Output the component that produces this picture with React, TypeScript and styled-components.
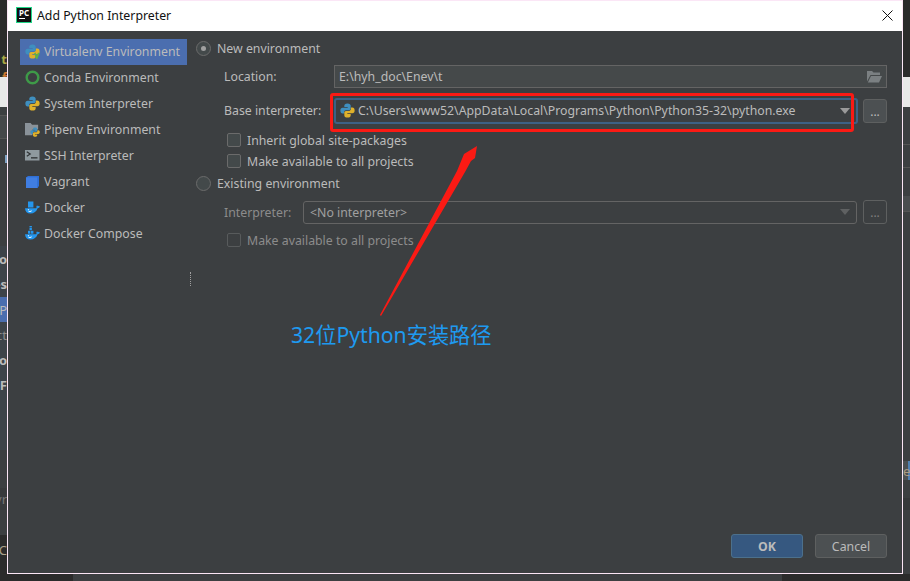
import React from 'react';
import styled, { createGlobalStyle } from 'styled-components';

const GlobalStyle = createGlobalStyle`
  html, body {
    margin: 0;
    padding: 0;
    background: #2b2b2b;
  }
`;

const Stage = styled('div')`
  position: relative;
  display: flex;
  flex-direction: column;
  width: 910px;
  height: 581px;
  overflow: hidden;
  font-family: "Noto Sans", "Noto Sans CJK SC", sans-serif;
  font-size: 12.3px;
  color: #bbbbbb;
`;

const MiddleRow = styled('div')`
  display: flex;
  height: 574px;
`;

const Strip = styled('div')<{ $width: number }>`
  display: flex;
  flex-direction: column;
  flex: none;
  width: ${ (p) => p.$width }px;
  overflow: hidden;
`;

const StripPart = styled('div')<{ $height: number; $bg: string; $line?: boolean; $edge?: string; $alignTop?: boolean; $start?: boolean }>`
  display: flex;
  flex: none;
  align-items: ${ (p) => (p.$alignTop ? 'flex-start' : 'center') };
  justify-content: ${ (p) => (p.$start ? 'flex-start' : 'flex-end') };
  height: ${ (p) => p.$height }px;
  background: ${ (p) => p.$bg };
  box-sizing: border-box;
  border-bottom: ${ (p) => (p.$line ? '1px solid #555' : 'none') };
  box-shadow: ${ (p) => (p.$edge ? `inset -2px 0 ${ p.$edge }` : 'none') };
  overflow: hidden;
`;

const StripText = styled('span')<{ $color: string; $bold?: boolean }>`
  flex: none;
  color: ${ (p) => p.$color };
  font-size: 13px;
  line-height: 14px;
  font-weight: ${ (p) => (p.$bold ? 700 : 400) };
`;

const BottomBar = styled('div')`
  display: flex;
  height: 7px;
  background: #2b2b2b;
  padding-left: 73px;
  padding-right: 128px;
`;

const BottomFill = styled('div')`
  flex: 1;
  background: #3c3f41;
`;

const Dialog = styled('div')`
  display: flex;
  flex: none;
  flex-direction: column;
  box-sizing: border-box;
  width: 896px;
  height: 574px;
  background: #3c3f41;
  border: 1px solid #fbe6f6;
`;

const TitleBar = styled('div')`
  display: flex;
  flex: none;
  align-items: center;
  box-sizing: border-box;
  height: 30px;
  background: #ffffff;
  padding: 0 9px 2px 8px;
  color: #111111;
`;

const AppLogo = styled('div')`
  display: flex;
  flex: none;
  flex-direction: column;
  box-sizing: border-box;
  width: 16px;
  height: 16px;
  background: #111111;
  border: 1px solid #21d789;
  padding: 1px 2px;
  color: #ffffff;
  font-size: 8px;
  font-weight: 700;
  line-height: 8px;
`;

const LogoBar = styled('div')`
  width: 6px;
  height: 1px;
  margin-top: 1px;
  background: #ffffff;
`;

const TitleText = styled('span')`
  flex: 1;
  margin-left: 5px;
`;

const Body = styled('div')`
  display: flex;
  flex: 1;
  min-height: 0;
`;

const Sidebar = styled('div')`
  display: flex;
  flex: none;
  flex-direction: column;
  width: 167px;
  padding: 8px 0 0 12px;
`;

const SidebarRow = styled('div')<{ $active?: boolean }>`
  display: flex;
  align-items: center;
  gap: 4px;
  box-sizing: border-box;
  height: 26px;
  padding: 0 0 2px 5px;
  background: ${ (p) => (p.$active ? '#4b6eaf' : 'transparent') };
  white-space: nowrap;
`;

const Splitter = styled('div')`
  flex: none;
  box-sizing: border-box;
  width: 6px;
  height: 14px;
  margin-top: 241px;
  margin-left: 3px;
  border-left: 1px dotted #a0a0a0;
`;

const Main = styled('div')`
  display: flex;
  flex: 1;
  flex-direction: column;
  padding: 6px 15px 15px 0;
`;

const OptionRow = styled('div')`
  display: flex;
  align-items: center;
  gap: 6px;
  height: 22px;
`;

const Radio = styled('div')<{ $checked?: boolean }>`
  display: flex;
  flex: none;
  align-items: center;
  justify-content: center;
  box-sizing: border-box;
  width: 15px;
  height: 15px;
  margin-top: 1px;
  border: 1px solid #6b6b6b;
  border-radius: 50%;
  background: #43494a;

  &::after {
    content: '';
    display: ${ (p) => (p.$checked ? 'block' : 'none') };
    width: 5px;
    height: 5px;
    border-radius: 50%;
    background: #a0a0a0;
  }
`;

const FieldRow = styled('div')<{ $top: number }>`
  display: flex;
  align-items: center;
  margin-top: ${ (p) => p.$top }px;
  padding-left: 28px;
`;

const Label = styled('span')<{ $width: number; $dim?: boolean; $lift?: boolean }>`
  flex: none;
  width: ${ (p) => p.$width }px;
  padding-bottom: ${ (p) => (p.$lift ? 2 : 0) }px;
  color: ${ (p) => (p.$dim ? '#8c8c8c' : '#bbbbbb') };
`;

const PathField = styled('div')`
  display: flex;
  flex: 1;
  align-items: center;
  justify-content: space-between;
  box-sizing: border-box;
  height: 23px;
  padding: 0 4px 0 4px;
  background: #45494a;
  border: 1px solid #646464;
`;

const Combo = styled('div')<{ $focused?: boolean }>`
  display: flex;
  flex: 1;
  align-items: center;
  gap: 3px;
  box-sizing: border-box;
  height: ${ (p) => (p.$focused ? 26 : 23) }px;
  padding: 0 6px ${ (p) => (p.$focused ? 1 : 0) }px ${ (p) => (p.$focused ? 4 : 6) }px;
  background: #3c3f41;
  border: ${ (p) => (p.$focused ? '2px solid #3d6185' : '1px solid #646464') };
  border-radius: 3px;
  white-space: nowrap;
`;

const ComboText = styled('span')<{ $dim?: boolean }>`
  flex: 1;
  color: ${ (p) => (p.$dim ? '#a0a0a0' : '#bbbbbb') };
`;

const Caret = styled('div')<{ $dim?: boolean }>`
  flex: none;
  width: 0;
  height: 0;
  border-left: 5px solid transparent;
  border-right: 5px solid transparent;
  border-top: 6px solid ${ (p) => (p.$dim ? '#5f6162' : '#9a9a9a') };
`;

const BrowseButton = styled('div')<{ $dim?: boolean }>`
  display: flex;
  flex: none;
  align-items: flex-end;
  justify-content: center;
  box-sizing: border-box;
  width: 24px;
  height: 24px;
  margin-left: ${ (p) => (p.$dim ? 6 : 5) }px;
  padding-bottom: 4px;
  background: ${ (p) => (p.$dim ? '#3c3f41' : '#4c5052') };
  border: 1px solid #5e6060;
  border-radius: 3px;
  color: ${ (p) => (p.$dim ? '#808080' : '#bbbbbb') };
  font-size: 12px;
  line-height: 12px;
`;

const CheckRow = styled('div')<{ $top?: number; $dim?: boolean }>`
  display: flex;
  align-items: center;
  gap: 6px;
  height: 21px;
  margin-top: ${ (p) => p.$top ?? 0 }px;
  padding-left: 31px;
  color: ${ (p) => (p.$dim ? '#8c8c8c' : '#bbbbbb') };
`;

const Checkbox = styled('div')<{ $dim?: boolean }>`
  flex: none;
  box-sizing: border-box;
  width: 14px;
  height: 14px;
  margin-bottom: 1px;
  background: ${ (p) => (p.$dim ? '#3c3f41' : '#43494a') };
  border: 1px solid ${ (p) => (p.$dim ? '#585b5c' : '#6b6b6b') };
  border-radius: 2px;
`;

const Footer = styled('div')`
  display: flex;
  justify-content: flex-end;
  gap: 12px;
  margin-top: auto;
`;

const DialogButton = styled('div')<{ $primary?: boolean }>`
  display: flex;
  align-items: center;
  justify-content: center;
  box-sizing: border-box;
  width: 72px;
  height: 24px;
  background: ${ (p) => (p.$primary ? '#365880' : '#4c5052') };
  border: 1px solid ${ (p) => (p.$primary ? '#4c708c' : '#5e6060') };
  border-radius: 3px;
  font-weight: ${ (p) => (p.$primary ? 700 : 400) };
`;

const AnnotationLayer = styled('svg')`
  position: absolute;
  inset: 0;
  pointer-events: none;
`;

const Highlight = styled('div')`
  position: absolute;
  left: 330px;
  top: 93px;
  box-sizing: border-box;
  width: 524px;
  height: 39px;
  border: 3px solid #fb1a14;
  border-radius: 3px;
`;

const Caption = styled('div')`
  position: absolute;
  left: 291px;
  top: 320px;
  color: #1e9af0;
  font-size: 21.2px;
  line-height: 30px;
  white-space: nowrap;
`;

const snake = 'M8 .5C5.5.5 4.6 1.5 4.6 3v1.2h3.6v.9H2.8C1.3 5.1.4 6.2.4 8s.9 3.2 2.4 3.2h1.6V9.6c0-1.2.9-2 2-2h3.2c1 0 1.8-.8 1.8-1.8V3C11.4 1.5 10.4.5 8 .5z';

const PythonIcon: React.FC<{ badge?: boolean }> = ({ badge }) => (
  <svg width={ 15 } height={ 15 } viewBox='0 0 16 16' style={ { flex: 'none' } }>
    <path fill='#3f8fbf' d={ snake } />
    <path fill='#dfb12b' transform='rotate(180 8 8)' d={ snake } />
    { badge && <path fill='none' stroke='#62b543' strokeWidth='1.8' d='M10.5 9.5l2 5.5 2.2-5.5' /> }
  </svg>
);

const CondaIcon = () => (
  <svg width={ 15 } height={ 15 } viewBox='0 0 16 16' style={ { flex: 'none' } }>
    <circle cx='8' cy='8' r='6.2' fill='none' stroke='#3e9a48' strokeWidth='2.6' />
  </svg>
);

const PipenvIcon = () => (
  <svg width={ 15 } height={ 15 } viewBox='0 0 16 16' style={ { flex: 'none' } }>
    <path fill='#8a9299' d='M0 1h6l1.5 2H14v5H8v6H0z' />
    <g transform='translate(5.5 5.5) scale(.66)'>
      <path fill='#3f8fbf' d={ snake } />
      <path fill='#dfb12b' transform='rotate(180 8 8)' d={ snake } />
    </g>
  </svg>
);

const SshIcon = () => (
  <svg width={ 15 } height={ 15 } viewBox='0 0 15 15' style={ { flex: 'none' } }>
    <rect x='0' y='2' width='14.5' height='10.5' fill='#8f9a9f' />
    <path fill='none' stroke='#2f3234' strokeWidth='1.2' d='M1.8 3.8l3.4 2.2-3.4 2.2' />
    <rect x='6' y='9.2' width='6.5' height='1.3' fill='#2f3234' />
  </svg>
);

const VagrantIcon = () => (
  <svg width={ 15 } height={ 15 } viewBox='0 0 15 15' style={ { flex: 'none' } }>
    <path fill='#2f6fd6' d='M1 3.4L3 2h11v9.8L12.6 14H1z' />
    <path fill='#4a86e8' d='M1 3.4h11.2V14H1z' opacity='.65' />
  </svg>
);

const DockerIcon: React.FC<{ compose?: boolean }> = ({ compose }) => (
  <svg width={ 15 } height={ 15 } viewBox='0 0 15 15' style={ { flex: 'none' } }>
    <path
      fill='#2496ed'
      d='M0 8.2h11.2c.5-.9.4-1.7.1-2.3.8-.4 1.5-.2 2.3.2.4.2.9.4 1.4.5-.6 1-1.4 1.5-2.4 1.6-1 3.2-3.6 5.3-7.2 5.3-3.2 0-5.2-2-5.4-5.3z'
    />
    { compose ? (
      <>
        <rect x='3' y='4.8' width='2.4' height='2.9' fill='#2496ed' />
        <rect x='6' y='4.8' width='2.4' height='2.9' fill='#2496ed' />
        <rect x='4.5' y='1.8' width='2.4' height='2.4' fill='#2496ed' />
        <rect x='4.5' y='-.4' width='2.4' height='1.7' fill='#2496ed' />
      </>
    ) : (
      <rect x='3' y='1.5' width='5.4' height='6' fill='#2496ed' />
    ) }
    <path fill='#dceefb' d='M3 10.8c1.5.3 3 .1 4.2-.6-.6 1.4-1.8 2-3 1.8-.5-.2-.9-.6-1.2-1.2z' />
    <circle cx='3.4' cy='9.6' r='.6' fill='#dceefb' />
  </svg>
);

const FolderIcon = () => (
  <svg width={ 15 } height={ 13 } viewBox='0 0 15 13' style={ { flex: 'none' } }>
    <path fill='#7b8082' d='M0 1h5l1.5 1.5H13V5H3.5L0 11.5z' />
    <path fill='#7b8082' d='M4 6h11l-3 6.5H.8z' />
  </svg>
);

const environments = [
  { name: 'Virtualenv Environment', icon: <PythonIcon badge />, active: true },
  { name: 'Conda Environment', icon: <CondaIcon /> },
  { name: 'System Interpreter', icon: <PythonIcon /> },
  { name: 'Pipenv Environment', icon: <PipenvIcon /> },
  { name: 'SSH Interpreter', icon: <SshIcon /> },
  { name: 'Vagrant', icon: <VagrantIcon /> },
  { name: 'Docker', icon: <DockerIcon /> },
  { name: 'Docker Compose', icon: <DockerIcon compose /> }
];

const App: React.FC = () => {
  return (
    <Stage>
      <GlobalStyle />
      <MiddleRow>
        <Strip $width={ 7 }>
          <StripPart $height={ 50 } $bg='#2b2b2b' />
          <StripPart $height={ 17 } $bg='#2b2b2b'><StripText $color='#a8a845' $bold>t</StripText></StripPart>
          <StripPart $height={ 3 } $bg='#2b2b2b' />
          <StripPart $height={ 7 } $bg='#2b2b2b' $alignTop><StripText $color='#cc7832' $bold>f</StripText></StripPart>
          <StripPart $height={ 30 } $bg='#e8e8e8' />
          <StripPart $height={ 9 } $bg='#3c3f41' $line />
          <StripPart $height={ 23 } $bg='#45484a' $line />
          <StripPart $height={ 16 } $bg='#3c3f41' />
          <StripPart $height={ 8 } $bg='#3c3f41' $edge='#7fa3c4' />
          <StripPart $height={ 83 } $bg='#3c3f41' />
          <StripPart $height={ 25 } $bg='#3d4349'><StripText $color='#bbbbbb' $bold>o</StripText></StripPart>
          <StripPart $height={ 26 } $bg='#3d4349'><StripText $color='#bbbbbb' $bold>-s</StripText></StripPart>
          <StripPart $height={ 25 } $bg='#4b6eaf'><StripText $color='#bbbbbb'>P</StripText></StripPart>
          <StripPart $height={ 25 } $bg='#3d4349'><StripText $color='#8c8c8c'>ct</StripText></StripPart>
          <StripPart $height={ 25 } $bg='#3d4349'><StripText $color='#bbbbbb' $bold>o</StripText></StripPart>
          <StripPart $height={ 25 } $bg='#3d4349'><StripText $color='#bbbbbb' $bold>F</StripText></StripPart>
          <StripPart $height={ 53 } $bg='#3d4349' />
          <StripPart $height={ 38 } $bg='#3c3f41' />
          <StripPart $height={ 22 } $bg='#383a3c'><StripText $color='#777777'>yr</StripText></StripPart>
          <StripPart $height={ 25 } $bg='#3c3f41' />
          <StripPart $height={ 30 } $bg='#2b2b2b'><StripText $color='#a9a08a'>C</StripText></StripPart>
          <StripPart $height={ 9 } $bg='#2b2b2b' />
        </Strip>
        <Dialog>
          <TitleBar>
            <AppLogo>
              PC
              <LogoBar />
            </AppLogo>
            <TitleText>Add Python Interpreter</TitleText>
            <svg width={ 11 } height={ 11 } viewBox='0 0 11 11'>
              <path d='M.5.5l10 10M10.5.5l-10 10' stroke='#111111' strokeWidth='1' />
            </svg>
          </TitleBar>
          <Body>
            <Sidebar>
              {
                environments.map((env) => (
                  <SidebarRow key={ env.name } $active={ env.active }>
                    { env.icon }
                    { env.name }
                  </SidebarRow>
                ))
              }
            </Sidebar>
            <Splitter />
            <Main>
              <OptionRow>
                <Radio $checked />
                New environment
              </OptionRow>
              <FieldRow $top={ 6 }>
                <Label $width={ 110 }>Location:</Label>
                <PathField>
                  E:\hyh_doc\Enev\t
                  <FolderIcon />
                </PathField>
              </FieldRow>
              <FieldRow $top={ 10 }>
                <Label $width={ 110 } $lift>Base interpreter:</Label>
                <Combo $focused>
                  <PythonIcon />
                  <ComboText>C:\Users\www52\AppData\Local\Programs\Python\Python35-32\python.exe</ComboText>
                  <Caret />
                </Combo>
                <BrowseButton>...</BrowseButton>
              </FieldRow>
              <CheckRow $top={ 6 }>
                <Checkbox />
                Inherit global site-packages
              </CheckRow>
              <CheckRow>
                <Checkbox />
                Make available to all projects
              </CheckRow>
              <OptionRow>
                <Radio />
                Existing environment
              </OptionRow>
              <FieldRow $top={ 6 }>
                <Label $width={ 79 } $dim>Interpreter:</Label>
                <Combo>
                  <ComboText $dim>&lt;No interpreter&gt;</ComboText>
                  <Caret $dim />
                </Combo>
                <BrowseButton $dim>...</BrowseButton>
              </FieldRow>
              <CheckRow $top={ 6 } $dim>
                <Checkbox $dim />
                Make available to all projects
              </CheckRow>
              <Footer>
                <DialogButton $primary>OK</DialogButton>
                <DialogButton>Cancel</DialogButton>
              </Footer>
            </Main>
          </Body>
        </Dialog>
        <Strip $width={ 7 }>
          <StripPart $height={ 77 } $bg='#2b2b2b' />
          <StripPart $height={ 30 } $bg='#e8e8e8' />
          <StripPart $height={ 38 } $bg='#3c3f41' $line />
          <StripPart $height={ 23 } $bg='#3c3f41' $line />
          <StripPart $height={ 28 } $bg='#3c3f41' />
          <StripPart $height={ 16 } $bg='#4a4d4f' $line />
          <StripPart $height={ 249 } $bg='#3c3f41' />
          <StripPart $height={ 19 } $bg='#4c5052' $edge='#4f80b0' $start><StripText $color='#a89a80'>e</StripText></StripPart>
          <StripPart $height={ 18 } $bg='#3c3f41' />
          <StripPart $height={ 12 } $bg='#36383a' />
          <StripPart $height={ 64 } $bg='#3c3f41' />
        </Strip>
      </MiddleRow>
      <BottomBar>
        <BottomFill />
      </BottomBar>
      <Highlight />
      <AnnotationLayer width={ 910 } height={ 581 } viewBox='0 0 910 581'>
        <polygon
          fill='#fb1a14'
          points='380,315 457,171 464,154 477,146 475,158 471,161 465,172 381,316'
        />
      </AnnotationLayer>
      <Caption>32位Python安装路径</Caption>
    </Stage>
  );
};

export default App;
